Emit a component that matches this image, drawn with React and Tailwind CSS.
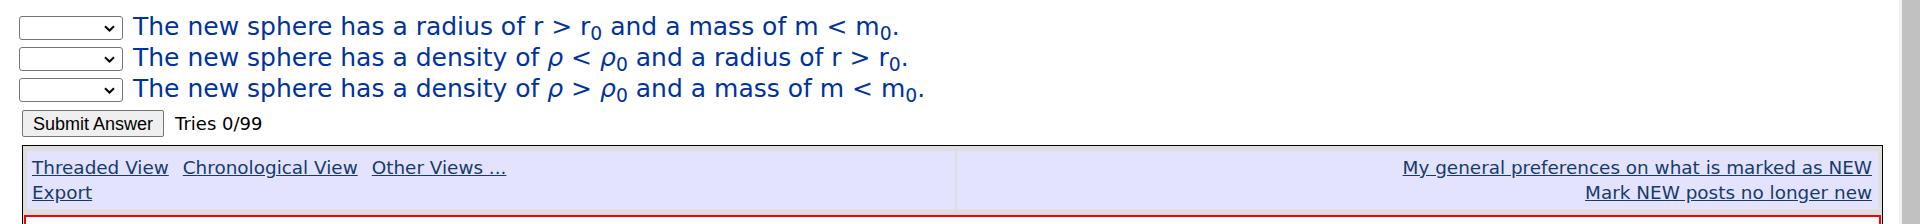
import React from "react";

const rows = [
  <>
    The new sphere has a radius of r &gt; r<sub>0</sub> and a mass of m &lt; m<sub>0</sub>.
  </>,
  <>
    The new sphere has a density of <i>ρ</i> &lt; <i>ρ</i><sub>0</sub> and a radius of r &gt; r<sub>0</sub>.
  </>,
  <>
    The new sphere has a density of <i>ρ</i> &gt; <i>ρ</i><sub>0</sub> and a mass of m &lt; m<sub>0</sub>.
  </>,
];

function Dropdown() {
  return (
    <div className="relative mt-[5px] h-[24px] w-[104px] shrink-0">
      <select className="h-full w-full appearance-none rounded-[3px] border border-[#767676] bg-white" />
      <svg
        className="pointer-events-none absolute right-[8px] top-[9px]"
        width="11"
        height="7"
        viewBox="0 0 11 7"
      >
        <path d="M1 1.2 L5.5 5.5 L10 1.2" fill="none" stroke="#000" strokeWidth="2" />
      </svg>
    </div>
  );
}

export default function App() {
  return (
    <div className="flex h-[224px] w-full overflow-hidden bg-white font-['DejaVu_Sans',Verdana,sans-serif]">
      <div className="flex-1 pl-[22px] pr-[16px] pt-[11px]">
        {/* answer rows */}
        <div className="-ml-[3px]">
          {rows.map((txt, i) => (
            <div key={i} className="flex h-[31px] items-start">
              <Dropdown />
              <span className="ml-[10px] whitespace-nowrap text-[25px] leading-[31px] text-[#0033a0]">
                {txt}
              </span>
            </div>
          ))}
        </div>

        <div className="mt-[6px] flex items-center">
          <button className="h-[27px] rounded-[2px] border border-[#767676] bg-[#efefef] px-[10px] font-['Liberation_Sans',Arial,sans-serif] text-[18px] leading-none text-black">
            Submit Answer
          </button>
          <span className="ml-[11px] text-[18px] text-black">Tries 0/99</span>
        </div>

        {/* discussion box */}
        <div className="mt-[8px] border border-black bg-[#dedede]">
          <div className="mx-[4px] mt-[5px] grid grid-cols-[928px_1fr] gap-[2px] text-[18.4px] leading-[25px] text-[#173b6d]">
            <div className="bg-[#e3e3fd] px-[5px] py-[4px]">
              <div className="flex">
                <a href="#" className="mr-[14px] underline">Threaded View</a>
                <a href="#" className="mr-[14px] underline">Chronological View</a>
                <a href="#" className="underline">Other Views ...</a>
              </div>
              <div>
                <a href="#" className="underline">Export</a>
              </div>
            </div>
            <div className="bg-[#e3e3fd] px-[6px] py-[4px] text-right">
              <div>
                <a href="#" className="underline">My general preferences on what is marked as NEW</a>
              </div>
              <div>
                <a href="#" className="underline">Mark NEW posts no longer new</a>
              </div>
            </div>
          </div>
          <div className="mx-[1px] mt-[6px] h-[60px] border-2 border-[#ff0000] bg-white" />
        </div>
      </div>

      {/* scrollbar */}
      <div className="w-[21px] shrink-0 bg-[#f1f1f1] pl-[3px]">
        <div className="h-full bg-[#c1c1c1]" />
      </div>
    </div>
  );
}
